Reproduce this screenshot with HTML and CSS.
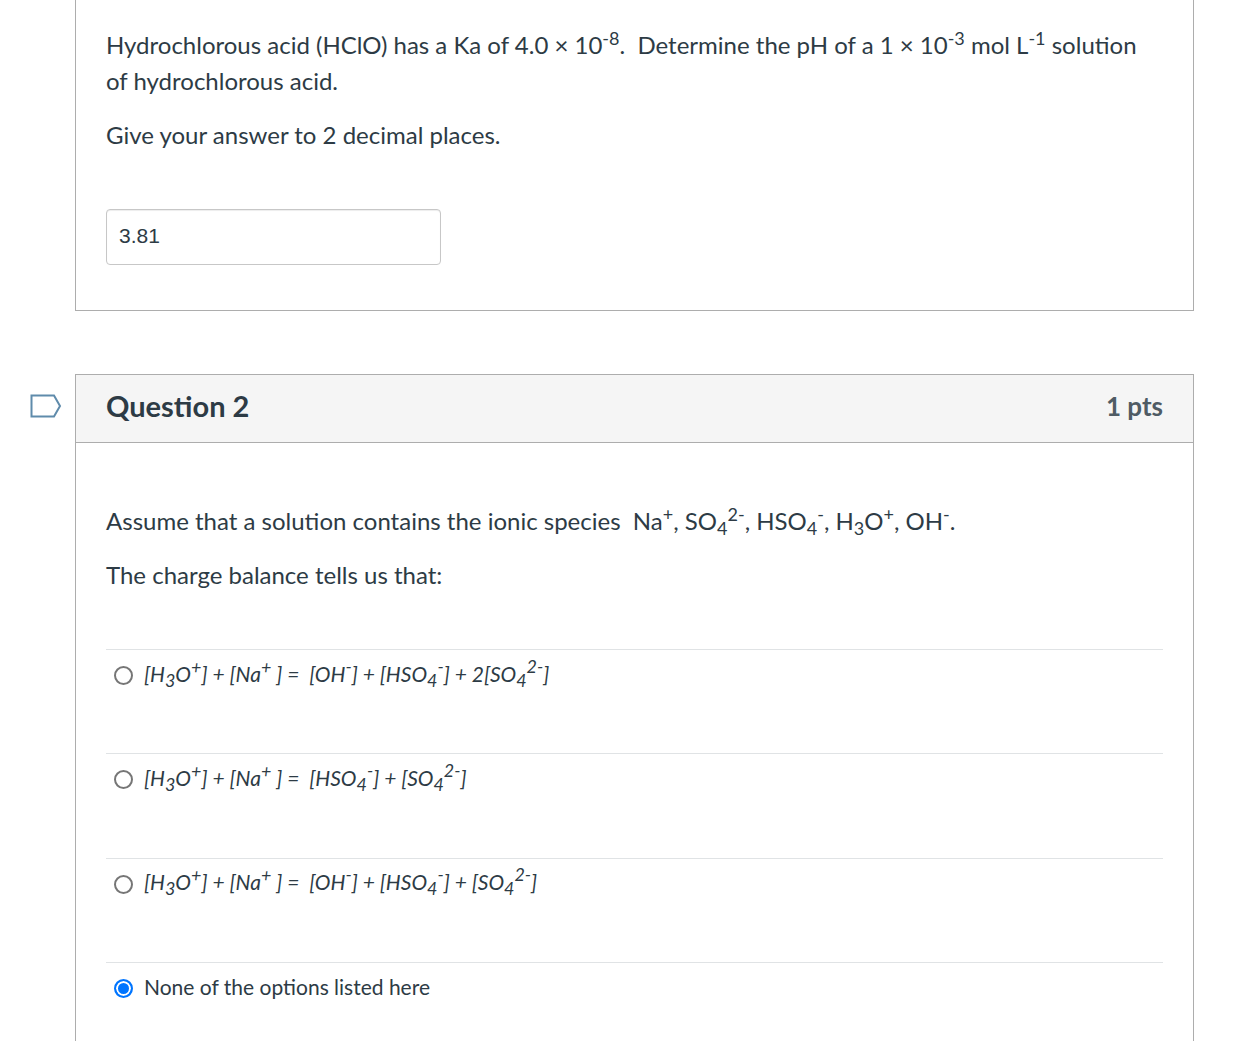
FILE: index.html
```html
<!DOCTYPE html>
<html lang="en">
<head>
  <meta charset="UTF-8" />
  <title>Quiz</title>
  <link rel="stylesheet" href="styles.css">
</head>
<body>
<div class="quiz">
  <div class="question first">
    <div class="question-text">
      <p>Hydrochlorous acid (HClO) has a Ka of 4.0 × 10<sup>-8</sup>.&nbsp; Determine the pH of a 1 × 10<sup>-3</sup> mol L<sup>-1</sup> solution of hydrochlorous acid.</p>
      <p>Give your answer to 2 decimal places.</p>
    </div>
    <div class="answer-box">3.81</div>
  </div>

  <div class="question second">
    <svg class="flag" width="32" height="24" viewBox="0 0 32 24">
      <path d="M1.5 1.5H24L30 12L24 22.5H1.5Z" fill="#fff" stroke="#5f8bab" stroke-width="2"/>
    </svg>
    <div class="question-header">
      <span class="question-name">Question 2</span>
      <span class="question-pts">1 pts</span>
    </div>
    <div class="question-body">
      <div class="question-text">
        <p>Assume that a solution contains the ionic species&nbsp; Na<sup>+</sup>, SO<sub>4</sub><sup>2-</sup>, HSO<sub>4</sub><sup>-</sup>, H<sub>3</sub>O<sup>+</sup>, OH<sup>-</sup>.</p>
        <p>The charge balance tells us that:</p>
      </div>
      <div class="answers">
        <label class="answer"><span class="radio"></span><em>[H<sub>3</sub>O<sup>+</sup>] + [Na<sup>+</sup> ] =&nbsp; [OH<sup>-</sup>] + [HSO<sub>4</sub><sup>-</sup>] + 2[SO<sub>4</sub><sup>2-</sup>]</em></label>
        <label class="answer"><span class="radio"></span><em>[H<sub>3</sub>O<sup>+</sup>] + [Na<sup>+</sup> ] =&nbsp; [HSO<sub>4</sub><sup>-</sup>] + [SO<sub>4</sub><sup>2-</sup>]</em></label>
        <label class="answer"><span class="radio"></span><em>[H<sub>3</sub>O<sup>+</sup>] + [Na<sup>+</sup> ] =&nbsp; [OH<sup>-</sup>] + [HSO<sub>4</sub><sup>-</sup>] + [SO<sub>4</sub><sup>2-</sup>]</em></label>
        <label class="answer"><span class="radio checked"></span>None of the options listed here</label>
      </div>
    </div>
  </div>
</div>
</body>
</html>
```

FILE: styles.css
```css
html, body {
  margin: 0;
  height: 1041px;
  overflow: hidden;
  background: #fff;
}
body {
  font-family: Lato, "Liberation Sans", sans-serif;
  color: #2d3b45;
}
.quiz {
  width: 1119px;
  margin-left: 75px;
}
.question {
  position: relative;
  border: 1px solid #adadad;
  border-top: none;
  background: #fff;
}
.question.first {
  padding: 27px 30px 45px;
  height: 311px;
  box-sizing: border-box;
}
.question.second {
  margin-top: 63px;
  border-top: 1px solid #adadad;
  border-bottom: none;
}
.question-text {
  font-size: 24px;
  line-height: 36px;
}
.question-text p {
  margin: 0 0 18px;
}
sup, sub {
  font-size: 75%;
  line-height: 0;
  position: relative;
  vertical-align: baseline;
}
sup { top: -0.5em; }
sub { bottom: -0.25em; }
.answer-box {
  width: 335px;
  height: 56px;
  box-sizing: border-box;
  margin-top: 56px;
  padding: 0 12px;
  border: 1px solid #c7c7c7;
  border-radius: 4px;
  box-shadow: inset 0 1px 1px rgba(0,0,0,0.075);
  font-family: "Liberation Sans", Arial, sans-serif;
  font-size: 21px;
  line-height: 52px;
}
.flag {
  position: absolute;
  left: -46px;
  top: 19px;
}
.question-header {
  display: flex;
  justify-content: space-between;
  align-items: center;
  height: 61px;
  padding: 0 30px 6px;
  background: #f5f5f5;
  border-bottom: 1px solid #adadad;
}
.question-name {
  font-size: 29px;
  font-weight: 700;
}
.question-pts {
  font-size: 26px;
  font-weight: 700;
  color: #4f5b64;
}
.question-body {
  padding: 60px 30px 0;
}
.answers {
  margin-top: 56px;
}
.answer {
  display: flex;
  align-items: center;
  gap: 11px;
  height: 104.33px;
  box-sizing: border-box;
  padding: 0 0 57px 8px;
  border-top: 1px solid #e0e3e5;
  font-size: 21px;
}
.answer em {
  font-size: 21px;
}
.answer em sub, .answer em sup {
  font-size: 85%;
}
.answer em sup { top: -0.5em; }
.answer em sub { bottom: -0.28em; }
.radio {
  flex: none;
  width: 19px;
  height: 19px;
  margin-top: 5px;
  box-sizing: border-box;
  border: 2px solid #767676;
  border-radius: 50%;
  background: #fff;
}
.radio.checked {
  border-color: #0075ff;
  background: #0075ff;
  box-shadow: inset 0 0 0 2px #fff;
}
```
